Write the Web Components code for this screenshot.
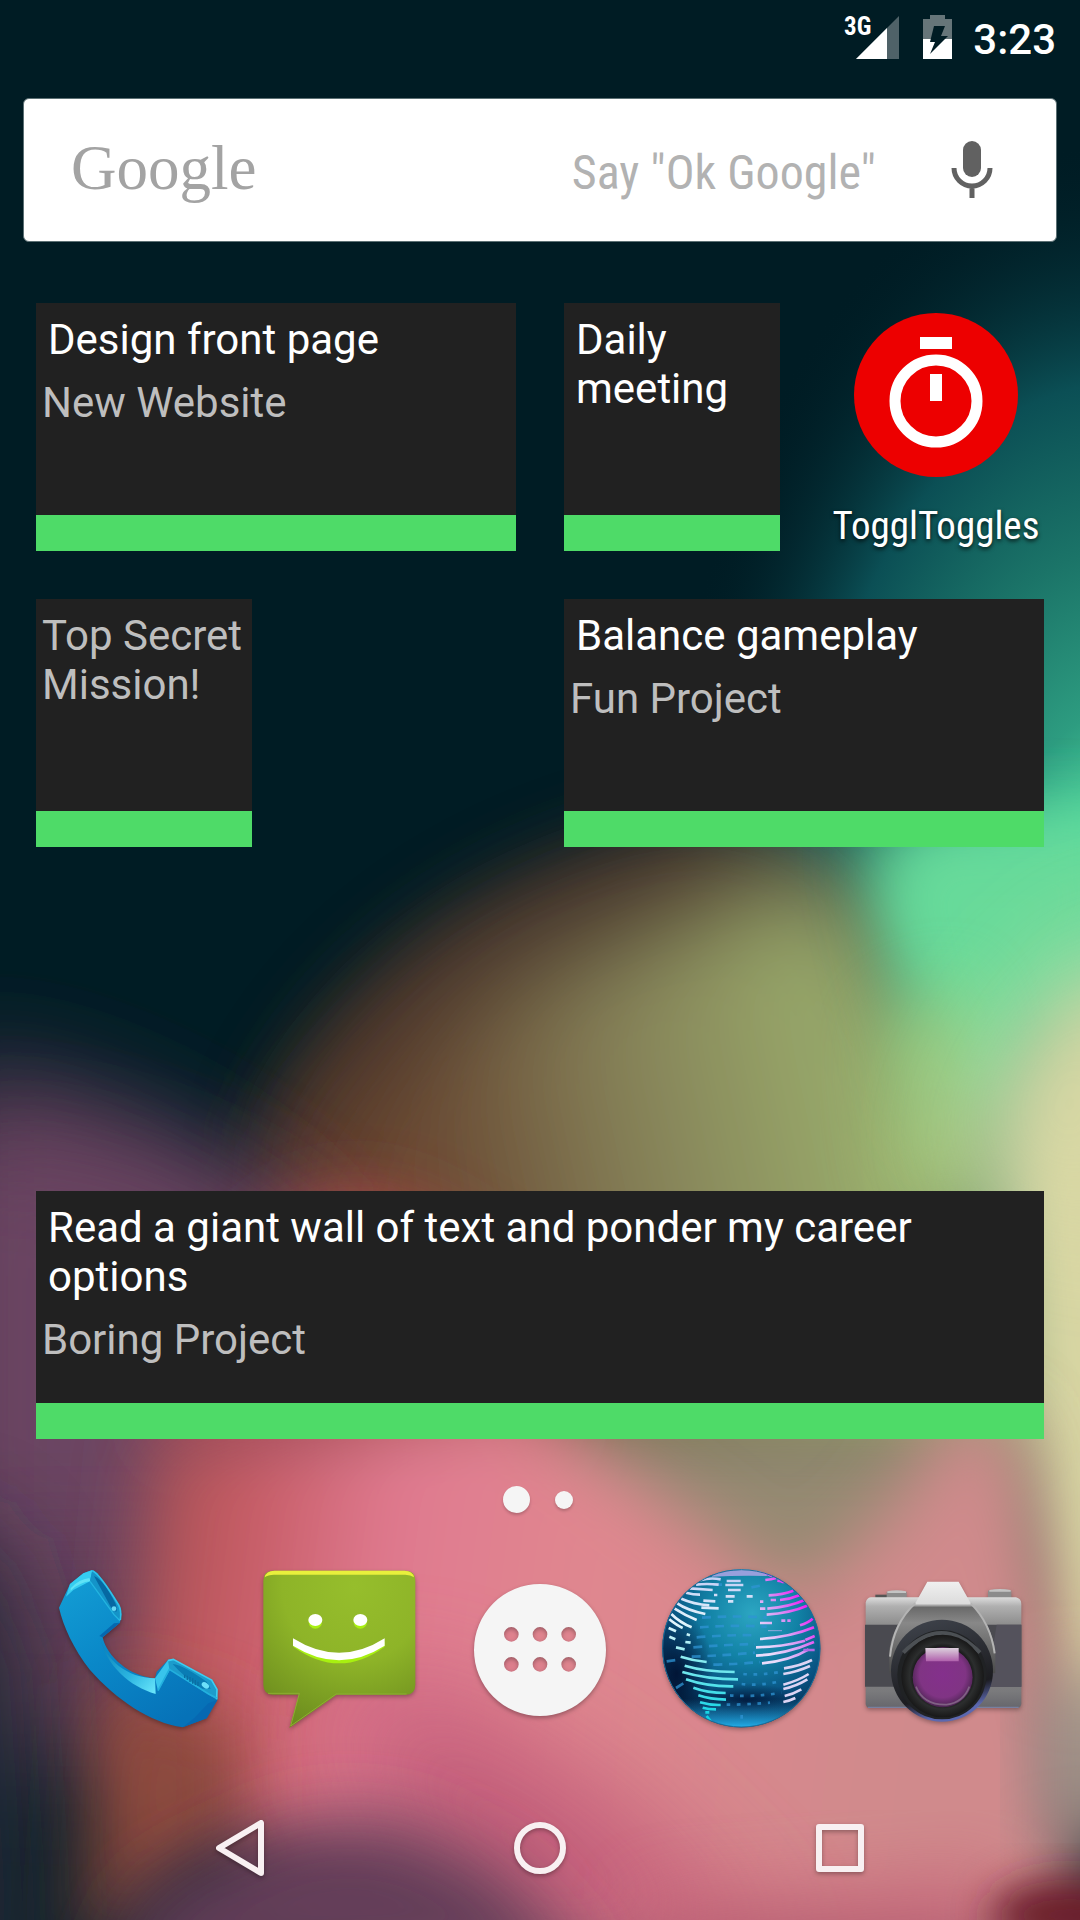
<!DOCTYPE html>
<html lang="en">
<head>
<meta charset="utf-8">
<meta name="viewport" content="width=device-width, initial-scale=1">
<title>Home screen</title>
<style>
  body {
    margin: 0;
    background: #001c24;
    font-family: Roboto, "Liberation Sans", sans-serif;
  }
</style>
</head>
<body>
<home-screen>
  <status-bar slot="status" time="3:23" network="3G"></status-bar>
  <search-bar slot="search" hint='Say "Ok Google"'>Google</search-bar>

  <toggle-widget span="2"><span slot="task">Design front page</span><span slot="project">New Website</span></toggle-widget>
  <toggle-widget><span slot="task">Daily meeting</span></toggle-widget>
  <app-shortcut>TogglToggles</app-shortcut>
  <toggle-widget><span slot="project">Top Secret Mission!</span></toggle-widget>
  <toggle-widget span="2" column="3"><span slot="task">Balance gameplay</span><span slot="project">Fun Project</span></toggle-widget>
  <toggle-widget span="4" row="4"><span slot="task">Read a giant wall of text and ponder my career options</span><span slot="project">Boring Project</span></toggle-widget>

  <page-dots slot="footer"></page-dots>
  <app-dock slot="footer"></app-dock>
  <nav-bar slot="footer"></nav-bar>
</home-screen>

<script>
function define(name, html, setup) {
  const template = document.createElement("template");
  template.innerHTML = html;
  customElements.define(
    name,
    class extends HTMLElement {
      constructor() {
        super();
        this.attachShadow({ mode: "open" });
        this.shadowRoot.appendChild(template.content.cloneNode(true));
      }

      connectedCallback() {
        if (setup) setup(this, this.shadowRoot);
      }
    }
  );
}

define("wall-paper", `
  <style>
    :host { display: block; }
    svg { display: block; width: 100%; height: 100%; }
  </style>
  <svg viewBox="0 0 1080 1920" preserveAspectRatio="none" aria-hidden="true">
    <defs>
      <filter id="b20" x="-50%" y="-50%" width="200%" height="200%"><feGaussianBlur stdDeviation="20"/></filter>
      <filter id="b35" x="-50%" y="-50%" width="200%" height="200%"><feGaussianBlur stdDeviation="35"/></filter>
      <filter id="b60" x="-80%" y="-80%" width="260%" height="260%"><feGaussianBlur stdDeviation="55"/></filter>
      <radialGradient id="teal">
        <stop offset="0" stop-color="#58dca0"/>
        <stop offset=".12" stop-color="#48cc98"/>
        <stop offset=".25" stop-color="#2d9c80"/>
        <stop offset=".46" stop-color="#1b7468"/>
        <stop offset=".68" stop-color="#0b4f55"/>
        <stop offset="1" stop-color="#001c24" stop-opacity="0"/>
      </radialGradient>
      <linearGradient id="olive" gradientUnits="userSpaceOnUse" x1="240" y1="1120" x2="980" y2="960">
        <stop offset="0" stop-color="#6e4028"/>
        <stop offset=".25" stop-color="#6a4a34"/>
        <stop offset=".5" stop-color="#858058"/>
        <stop offset=".75" stop-color="#96a468"/>
        <stop offset="1" stop-color="#a0c478"/>
      </linearGradient>
      <linearGradient id="pink" gradientUnits="userSpaceOnUse" x1="120" y1="1500" x2="900" y2="1600">
        <stop offset="0" stop-color="#a05050"/>
        <stop offset=".15" stop-color="#c45a62"/>
        <stop offset=".35" stop-color="#e07a90"/>
        <stop offset=".6" stop-color="#e0878f"/>
        <stop offset="1" stop-color="#d08a8c"/>
      </linearGradient>
    </defs>
    <rect width="1080" height="1920" fill="#001c24"/>
    <ellipse cx="1120" cy="900" rx="460" ry="760" fill="url(#teal)"/>
    <ellipse cx="1040" cy="910" rx="160" ry="90" fill="#56dca2" filter="url(#b35)"/>
    <path d="M240 1400 260 1120C320 990 440 890 600 840 720 800 800 830 860 900L1000 1400Z" fill="#5a382c" filter="url(#b35)" opacity=".75"/>
    <path d="M270 1500 290 1180C360 1060 480 970 640 930 760 870 820 860 870 900L960 1120 1100 1500Z" fill="url(#olive)" filter="url(#b60)"/>
    <path d="M870 830 900 960 940 1140 1000 1120 1130 900 1130 820Z" fill="#68da9a" filter="url(#b35)"/>
    <path d="M880 1020 960 980 1000 1200 900 1200Z" fill="#a8cc7c" filter="url(#b35)" opacity=".8"/>
    <path d="M1000 1200C1010 1090 1060 1010 1150 960V1800H1040Z" fill="#dcd8a4" filter="url(#b35)"/>
    <path d="M960 1170C980 1050 1040 980 1150 920V1240Z" fill="#d8d8a4" filter="url(#b60)" opacity=".8"/>
    <rect x="500" y="1430" width="520" height="220" fill="#958a72" filter="url(#b35)"/>
    <path d="M-60 1070C80 1070 240 1160 330 1260L300 1760-60 1760Z" fill="#603c58" filter="url(#b60)"/>
    <path d="M-60 1140C100 1140 220 1180 310 1260L300 1560-60 1560Z" fill="#6a4462" filter="url(#b60)"/>
    <path d="M290 1220C350 1180 410 1200 500 1270L560 1440 160 1440 200 1300Z" fill="#b84c50" filter="url(#b35)"/>
    <path d="M150 1440 520 1400 650 1490 800 1600 900 1500 960 1400 1010 1420 1040 1560 1080 1760 1080 1960 400 1960 120 1760Z" fill="url(#pink)" filter="url(#b35)"/>
    <path d="M-120 1540-20 1540 20 1660 40 2000-120 2000Z" fill="#282c38" filter="url(#b60)"/>
    <path d="M100 1680 240 1720 240 1830 150 1900 80 1960Z" fill="#8c4a3c" filter="url(#b35)"/>
    <path d="M330 1680 460 1700 620 1800 780 1960 500 1960 400 1840Z" fill="#c05a78" filter="url(#b60)" opacity=".9"/>
    <path d="M150 1890 300 1820 400 1820 500 1870 600 1980 100 1990Z" fill="#633e58" filter="url(#b35)"/>
    <path d="M640 1900 1000 1870V1990H640Z" fill="#c46478" filter="url(#b35)" opacity=".8"/>
    <rect x="1040" y="1680" width="80" height="160" fill="#948a84" filter="url(#b35)"/>
    <ellipse cx="1070" cy="1915" rx="80" ry="36" fill="#6c1c2c" filter="url(#b20)"/>
  </svg>
`);

define("home-screen", `
  <style>
    :host {
      display: flex;
      flex-direction: column;
      position: relative;
      min-height: 100vh;
    }
    wall-paper { position: absolute; inset: 0; }
    header, main, footer { position: relative; }
    main {
      display: grid;
      grid-template-columns: repeat(4, 1fr);
      grid-template-rows: repeat(4, 248px);
      gap: 48px;
      padding: 61px 36px 0;
    }
    footer {
      display: flex;
      flex-direction: column;
      flex: 1;
    }
  </style>
  <wall-paper></wall-paper>
  <header>
    <slot name="status"></slot>
    <slot name="search"></slot>
  </header>
  <main><slot></slot></main>
  <footer><slot name="footer"></slot></footer>
`);

define("status-bar", `
  <style>
    :host {
      display: flex;
      justify-content: flex-end;
      height: 72px;
      padding-right: 24px;
      color: #fff;
    }
    svg { display: block; }
    .network {
      margin-top: 15px;
      font: bold 25px/24px "Roboto Condensed", Roboto, sans-serif;
    }
    .signal { margin-left: -16px; }
    .battery { margin-left: 24px; }
    time {
      margin: 15px 0 0 20px;
      font-size: 42px;
      line-height: 49px;
      font-weight: 500;
    }
  </style>
  <span class="network"></span>
  <svg class="signal" width="44" height="72" viewBox="0 0 44 72" role="img" aria-label="Signal">
    <path d="M44 16V59H1Z" fill="#4f6268"/>
    <path d="M32 28V59H1Z" fill="#fff"/>
  </svg>
  <svg class="battery" width="30" height="72" viewBox="0 0 30 72" role="img" aria-label="Battery charging">
    <path d="M0 19H7V15H22V19H29V39H0Z" fill="#667579"/>
    <path d="M0 39H29V59H0Z" fill="#fff"/>
    <path d="M11 26H22L18 36H25L7 54 12 42H7Z" fill="#001c24"/>
  </svg>
  <time></time>
`, (host, root) => {
  root.querySelector(".network").textContent = host.getAttribute("network");
  root.querySelector("time").textContent = host.getAttribute("time");
});

define("search-bar", `
  <style>
    :host {
      display: flex;
      align-items: center;
      box-sizing: border-box;
      height: 144px;
      margin: 26px 23px 0;
      padding: 0 62px 0 47px;
      border: 1px solid #5c7074;
      border-radius: 6px;
      background: #fff;
    }
    label {
      padding-bottom: 4px;
      font: 63px/72px "Liberation Serif", serif;
      color: #a3a3a3;
    }
    input {
      flex: 1;
      min-width: 0;
      padding: 5px 0 0;
      border: 0;
      outline: 0;
      background: none;
      font: 48px/56px "Roboto Condensed", Roboto, sans-serif;
      text-align: right;
    }
    input::placeholder { color: #b2b2b2; opacity: 1; }
    button {
      margin-left: 74px;
      padding: 0 0 2px;
      border: 0;
      background: none;
    }
    svg { display: block; }
  </style>
  <label for="query"><slot></slot></label>
  <input id="query" type="text">
  <button aria-label="Voice search">
    <svg width="44" height="60" viewBox="0 0 44 60">
      <rect x="13" y="2" width="18" height="36" rx="9" fill="#616161"/>
      <path d="M4 29a18 18 0 0 0 36 0M22 47V59" fill="none" stroke="#616161" stroke-width="5"/>
    </svg>
  </button>
`, (host, root) => {
  root.querySelector("input").placeholder = host.getAttribute("hint");
});

define("toggle-widget", `
  <style>
    :host {
      display: flex;
      flex-direction: column;
      gap: 14px;
      box-sizing: border-box;
      padding: 12px 6px 0;
      border-bottom: 36px solid #4edb68;
      background: #212121;
      font-size: 42px;
      line-height: 49px;
    }
    ::slotted([slot="task"]) {
      padding: 0 6px;
      color: #fff;
    }
    ::slotted([slot="project"]) { color: #bebebe; }
  </style>
  <slot name="task"></slot>
  <slot name="project"></slot>
`, (host) => {
  host.style.gridColumn = `${host.getAttribute("column") || "auto"} / span ${host.getAttribute("span") || 1}`;
  if (host.hasAttribute("row")) host.style.gridRow = host.getAttribute("row");
});

define("app-shortcut", `
  <style>
    :host { display: block; }
    button {
      display: flex;
      flex-direction: column;
      align-items: center;
      gap: 26px;
      width: 100%;
      padding: 10px 0 0;
      border: 0;
      background: none;
      color: #fff;
      font: 39px/46px "Roboto Condensed", Roboto, sans-serif;
      text-shadow: 0 2px 4px rgba(0, 0, 0, .8);
    }
  </style>
  <button>
    <svg width="164" height="164" viewBox="0 0 164 164" aria-hidden="true">
      <circle cx="82" cy="82" r="82" fill="#ed0000"/>
      <path d="M66 24H98V36H66ZM76 61H88V88H76Z" fill="#fff"/>
      <circle cx="82" cy="88" r="41" fill="none" stroke="#fff" stroke-width="11"/>
    </svg>
    <span><slot></slot></span>
  </button>
`);

define("page-dots", `
  <style>
    :host {
      display: flex;
      justify-content: center;
      align-items: center;
      height: 81px;
      padding-top: 20px;
    }
    button {
      display: grid;
      place-items: center;
      width: 48px;
      height: 48px;
      padding: 0;
      border: 0;
      background: none;
    }
    button::before {
      content: "";
      width: 18px;
      height: 18px;
      border-radius: 50%;
      background: #f5f5f5;
      box-shadow: 0 2px 3px rgba(0, 0, 0, .2);
    }
    button[aria-current]::before { width: 27px; height: 27px; }
  </style>
  <button aria-label="Page 1" aria-current="page"></button>
  <button aria-label="Page 2"></button>
`);

define("app-dock", `
  <style>
    :host {
      display: grid;
      grid-template-columns: repeat(5, 1fr);
      justify-items: center;
      padding: 0 40px;
    }
    button { padding: 0; border: 0; background: none; }
    svg {
      display: block;
      width: 200px;
      height: 220px;
      filter: drop-shadow(0 2px 2px rgba(0, 0, 0, .3));
    }
  </style>

  <button aria-label="Phone">
    <svg viewBox="0 0 600 660">
      <defs>
        <linearGradient id="handle" x1="0" y1="0" x2=".7" y2="1">
          <stop offset="0" stop-color="#14a0d6"/>
          <stop offset=".5" stop-color="#0a88c8"/>
          <stop offset="1" stop-color="#0672b8"/>
        </linearGradient>
        <linearGradient id="inner" x1="0" y1="0" x2="1" y2="1">
          <stop offset="0" stop-color="#0878b0"/>
          <stop offset=".6" stop-color="#2ab4e0"/>
          <stop offset="1" stop-color="#6ce8fc"/>
        </linearGradient>
      </defs>
      <path d="M57 203 90 132 130 100 157 90 172 100 236 195 244 222 240 248 188 292C200 350 270 410 345 415L350 395 384 360 400 358 515 420 530 445 532 480 500 535 428 562C330 548 230 480 150 390 100 325 70 260 57 203Z" fill="url(#handle)"/>
      <path d="M90 132 130 100 157 90 150 124 100 150 78 170Z" fill="#35cdf0"/>
      <path d="M92 145Q115 118 148 114L152 124Q120 126 92 152Z" fill="#5fe2f6"/>
      <path d="M157 90 172 100 236 195 244 222 240 242 222 224 150 124Z" fill="#1493c8"/>
      <path d="M162 108Q190 118 226 190 234 210 228 216L212 200Z" fill="#0668a2"/>
      <path d="M150 124 222 224 240 242" fill="none" stroke="#22b4e0" stroke-width="4"/>
      <path d="M157 92Q180 102 236 195 245 212 241 240" fill="none" stroke="#2ec2ea" stroke-width="5"/>
      <circle cx="222" cy="206" r="7" fill="#68d8f4"/>
      <path d="M188 292 240 248 222 250 178 288Z" fill="#0668b0"/>
      <path d="M180 292C196 360 262 414 345 415L347 462C270 440 200 380 180 292Z" fill="url(#inner)"/>
      <path d="M345 415 384 360 402 358 388 392 354 452Z" fill="#38c4ec"/>
      <path d="M384 360 400 358 515 420 530 445 532 480 512 468 388 388Z" fill="#1c9ccc"/>
      <path d="M398 372Q430 376 500 425L512 446 486 446Q430 410 398 372Z" fill="#0a7cb4"/>
      <path d="M384 362 400 358 515 420 531 448 530 478" fill="none" stroke="#3bcdf2" stroke-width="5"/>
      <path d="M354 452 388 388 506 462 530 474" fill="none" stroke="#22b0de" stroke-width="5"/>
      <ellipse cx="496" cy="436" rx="12" ry="8" transform="rotate(35 496 436)" fill="#6ce0fa"/>
      <path d="M434 404V414M442 407V420M450 411V426M458 415V431M466 420V435M474 425V438" stroke="#0a6ea2" stroke-width="4"/>
      <path d="M428 562 500 535 532 480 505 490 462 535Z" fill="#0668b2"/>
    </svg>
  </button>

  <button aria-label="Messaging">
    <svg viewBox="0 0 600 660">
      <defs>
        <radialGradient id="bubble" cx=".6" cy=".1" r=".95">
          <stop offset="0" stop-color="#96be2c"/>
          <stop offset=".5" stop-color="#8eb428"/>
          <stop offset="1" stop-color="#6c8c1e"/>
        </radialGradient>
      </defs>
      <path d="M100 92H497Q526 92 526 122V434Q526 464 497 464H290L148 564 178 464H100Q70 464 70 434V122Q70 92 100 92Z" fill="url(#bubble)"/>
      <path d="M74 112Q78 92 104 92H493Q518 92 522 112 512 104 496 104H102Q84 104 74 112Z" fill="#e8f03c"/>
      <path d="M84 460H178L152 558 288 462H500" fill="none" stroke="#8cae30" stroke-width="3"/>
      <g fill="#a8f010">
        <ellipse cx="226" cy="247" rx="20" ry="19"/>
        <ellipse cx="361" cy="247" rx="20" ry="19"/>
        <path d="M160 306Q298 384 434 306V320Q298 420 160 320Z"/>
      </g>
      <g fill="#fff">
        <ellipse cx="226" cy="240" rx="21" ry="18"/>
        <ellipse cx="361" cy="240" rx="21" ry="18"/>
        <path d="M159 295Q298 382 434 295V317Q298 404 159 317Z"/>
      </g>
    </svg>
  </button>

  <button aria-label="All apps">
    <svg viewBox="0 0 600 660">
      <path fill="#f5f5f5" fill-rule="evenodd" d="M102 330a198 198 0 1 0 396 0a198 198 0 1 0-396 0Z
        M192 283a22 22 0 1 0 44 0a22 22 0 1 0-44 0Z M278 283a22 22 0 1 0 44 0a22 22 0 1 0-44 0Z M364 283a22 22 0 1 0 44 0a22 22 0 1 0-44 0Z
        M192 373a22 22 0 1 0 44 0a22 22 0 1 0-44 0Z M278 373a22 22 0 1 0 44 0a22 22 0 1 0-44 0Z M364 373a22 22 0 1 0 44 0a22 22 0 1 0-44 0Z"/>
    </svg>
  </button>

  <button aria-label="Browser">
    <svg viewBox="0 0 600 660">
      <defs>
        <radialGradient id="sea" cx=".57" cy=".28" r=".72">
          <stop offset="0" stop-color="#2ca6c2"/>
          <stop offset=".4" stop-color="#1282a6"/>
          <stop offset=".75" stop-color="#085080"/>
          <stop offset="1" stop-color="#042848"/>
        </radialGradient>
        <radialGradient id="shade">
          <stop offset="0" stop-color="#001030" stop-opacity=".9"/>
          <stop offset="1" stop-color="#001030" stop-opacity="0"/>
        </radialGradient>
        <linearGradient id="rim" x1="0" y1="0" x2="0" y2="1">
          <stop offset=".82" stop-color="#1c8cc8" stop-opacity="0"/>
          <stop offset="1" stop-color="#22b0ec"/>
        </linearGradient>
        <linearGradient id="east" gradientUnits="userSpaceOnUse" x1="370" y1="300" x2="510" y2="210">
          <stop offset="0" stop-color="#e8dcfc"/>
          <stop offset=".5" stop-color="#d898f4"/>
          <stop offset="1" stop-color="#f01cf4"/>
        </linearGradient>
        <linearGradient id="west" gradientUnits="userSpaceOnUse" x1="0" y1="90" x2="0" y2="530">
          <stop offset="0" stop-color="#c0c8f4"/>
          <stop offset=".35" stop-color="#e4f4fc"/>
          <stop offset=".6" stop-color="#8cecf0"/>
          <stop offset="1" stop-color="#10d4e4"/>
        </linearGradient>
        <clipPath id="ball"><circle cx="304" cy="325" r="237"/></clipPath>
      </defs>
      <circle cx="304" cy="325" r="237" fill="url(#sea)"/>
      <g clip-path="url(#ball)">
        <ellipse cx="110" cy="400" rx="110" ry="190" fill="url(#shade)"/>
        <ellipse cx="320" cy="485" rx="170" ry="55" fill="url(#shade)"/>
        <circle cx="304" cy="325" r="237" fill="url(#rim)"/>
        <g stroke="#2f94d4" stroke-width="8" stroke-dasharray="26 20" fill="none" opacity=".75">
          <path d="M186 233Q290 226 380 233M180 262Q280 254 380 260M170 292Q270 284 345 286M160 322Q260 314 345 312M155 350Q260 346 345 338"/>
          <path d="M220 374Q300 372 360 366M220 134H246M334 142 366 136M80 364 125 358M108 444 140 424" />
        </g>
        <g stroke="#2f94d4" stroke-width="8" stroke-dasharray="11 20" fill="none" opacity=".75">
          <path d="M310 402Q360 406 420 396M305 432Q360 438 420 424M270 466Q340 472 425 458M260 494Q320 494 390 488M305 525V550"/>
        </g>
        <path d="M222 98Q300 82 385 97L380 108Q300 106 215 110Z" fill="#98a0dc"/>
        <g fill="none" stroke="url(#west)" stroke-width="8">
          <path d="M230 90Q300 80 370 92M180 121Q210 112 242 118M168 134Q200 130 236 134M150 145Q190 148 218 150M138 158Q160 164 180 164M124 176Q160 192 208 196M112 190Q140 210 196 222M104 206Q135 226 170 240M94 222Q120 248 155 262M88 238Q110 256 128 264M86 264 108 274M88 290 106 298M108 322 134 328"/>
          <path d="M190 182 226 184M184 203 236 205M222 165H232M256 135H310M260 123H302M264 150H302M257 169H284M264 184H280M320 169H338M140 283 150 286M136 306 152 308"/>
          <path d="M122 350Q160 362 200 366M134 377Q190 394 284 396M127 396Q200 418 294 418M138 418Q200 440 280 439M160 443Q200 458 257 459M175 466Q210 478 258 479M180 487Q210 496 242 495M188 503Q205 508 228 508M196 517H208M200 528 212 544"/>
        </g>
        <g fill="none" stroke="url(#east)" stroke-width="8">
          <path d="M360 92 396 108M376 120Q395 118 408 114M412 122Q430 124 430 130M386 166Q430 164 460 152M420 180Q450 178 478 166M382 206Q450 200 494 180M380 224Q450 220 505 196M360 249H396M424 242H436M442 242H452M480 256Q505 248 518 236M360 206H376M360 185H370M392 180H408"/>
          <path d="M360 297Q450 292 522 262M348 322Q430 320 495 302M348 347Q440 342 522 306M366 370Q450 362 506 328M496 300 524 288"/>
          <path d="M384 272H426" stroke-width="3" opacity=".6"/>
        </g>
        <g fill="none" stroke="#dcd4f4" stroke-width="8">
          <path d="M432 385Q480 378 516 360M430 402Q470 396 510 378M430 434Q475 422 506 402M430 447Q470 438 502 418M434 468Q460 462 484 448M430 486Q450 482 466 474"/>
          <path d="M490 330 524 330" stroke="#b068e4"/>
        </g>
      </g>
      <circle cx="304" cy="325" r="236" fill="none" stroke="#1c6c98" stroke-width="3"/>
    </svg>
  </button>

  <button aria-label="Camera">
    <svg viewBox="0 0 600 660">
      <defs>
        <linearGradient id="metal" x1="0" y1="0" x2="0" y2="1">
          <stop offset="0" stop-color="#dcdcdc"/>
          <stop offset=".08" stop-color="#b0b0b0"/>
          <stop offset=".25" stop-color="#8c8c8c"/>
          <stop offset=".85" stop-color="#7a7a7c"/>
          <stop offset="1" stop-color="#66666c"/>
        </linearGradient>
        <linearGradient id="prism" x1="0" y1="0" x2="0" y2="1">
          <stop offset="0" stop-color="#f0f0f0"/>
          <stop offset=".24" stop-color="#dcdcdc"/>
          <stop offset=".28" stop-color="#6a6a6a"/>
          <stop offset=".45" stop-color="#888"/>
          <stop offset="1" stop-color="#4a4a4a"/>
        </linearGradient>
        <linearGradient id="barrel" x1="0" y1="0" x2=".3" y2="1">
          <stop offset="0" stop-color="#a8b0c0"/>
          <stop offset=".12" stop-color="#3c4048"/>
          <stop offset=".8" stop-color="#1c1c20"/>
          <stop offset="1" stop-color="#5c68b0"/>
        </linearGradient>
        <linearGradient id="flare" x1="0" y1="0" x2="0" y2="1">
          <stop offset="0" stop-color="#dcd0dc"/>
          <stop offset="1" stop-color="#b060ac"/>
        </linearGradient>
        <radialGradient id="glass" cx=".5" cy=".45" r=".55">
          <stop offset="0" stop-color="#84308c"/>
          <stop offset=".7" stop-color="#803484"/>
          <stop offset="1" stop-color="#4a2450"/>
        </radialGradient>
        <radialGradient id="ring">
          <stop offset=".62" stop-color="#080808"/>
          <stop offset=".8" stop-color="#2c2e2e"/>
          <stop offset="1" stop-color="#181818"/>
        </radialGradient>
      </defs>
      <path d="M106 164H144V182H106Z" fill="#555"/>
      <path d="M140 156Q170 148 200 156V180H140ZM444 152Q480 144 514 152V178H444Z" fill="#8c8c8c"/>
      <path d="M142 154Q170 148 198 154V159H142ZM448 150Q480 144 512 150V155H448Z" fill="#c4c4c4"/>
      <path d="M92 172H528Q544 176 544 192V490Q544 504 530 504H90Q77 504 77 490V188Q80 174 92 172Z" fill="url(#metal)"/>
      <path d="M75 254H544V440H75Z" fill="#4a4a50"/>
      <path d="M470 254H544V440H440Z" fill="#54525c"/>
      <path d="M84 502H536" stroke="#7880a0" stroke-width="4"/>
      <path d="M262 125H356L392 190Q452 250 466 330V400H148V330Q160 250 226 190Z" fill="url(#prism)"/>
      <path d="M226 190Q160 250 150 350M392 190Q452 250 464 340" fill="none" stroke="#b4b4b4" stroke-width="6"/>
      <circle cx="306" cy="392" r="153" fill="url(#barrel)"/>
      <circle cx="306" cy="404" r="134" fill="#202224"/>
      <path d="M190 338Q304 220 420 338" fill="none" stroke="#4c5054" stroke-width="12"/>
      <circle cx="308" cy="408" r="124" fill="url(#ring)"/>
      <circle cx="308" cy="412" r="90" fill="url(#glass)"/>
      <path d="M228 440Q250 496 320 494 370 488 388 440" fill="none" stroke="#806084" stroke-width="5"/>
      <path d="M256 324H356V364H258Z" fill="url(#flare)"/>
    </svg>
  </button>
`);

define("nav-bar", `
  <style>
    :host {
      display: grid;
      grid-template-columns: repeat(3, 1fr);
      justify-items: center;
      align-items: center;
      height: 144px;
      margin-top: auto;
      padding: 0 90px;
    }
    button { padding: 0; border: 0; background: none; }
    svg {
      display: block;
      filter: drop-shadow(0 2px 2px rgba(0, 0, 0, .3));
    }
    path, circle, rect {
      fill: none;
      stroke: #f8f0f2;
      stroke-width: 6;
      stroke-linejoin: round;
    }
  </style>
  <button aria-label="Back"><svg width="72" height="72" viewBox="0 0 72 72"><path d="M57 11V61L15 36Z"/></svg></button>
  <button aria-label="Home"><svg width="72" height="72" viewBox="0 0 72 72"><circle cx="36" cy="36" r="23"/></svg></button>
  <button aria-label="Overview"><svg width="72" height="72" viewBox="0 0 72 72"><rect x="15" y="15" width="42" height="42"/></svg></button>
`);
</script>
</body>
</html>
